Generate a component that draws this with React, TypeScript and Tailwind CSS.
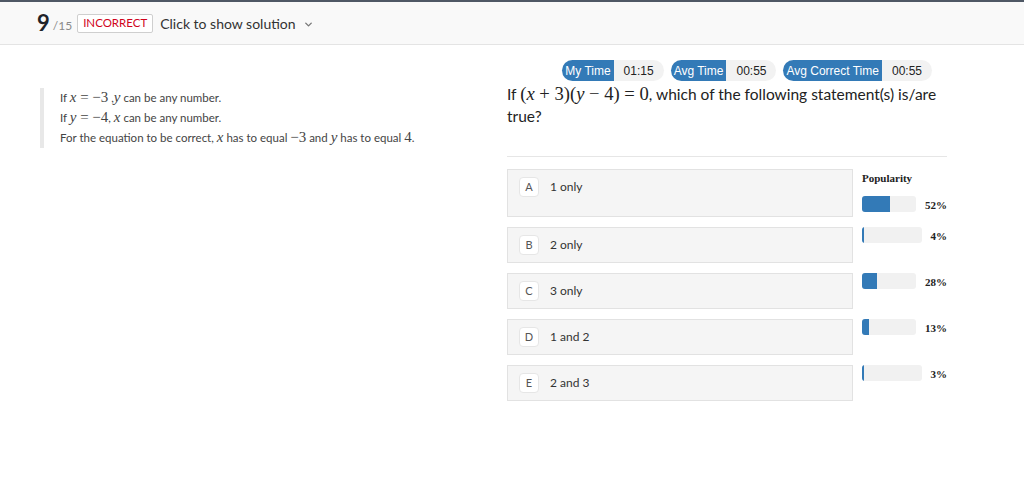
import { ChevronDown } from "lucide-react";

type Option = { letter: string; text: string; pct: number };

const options: Option[] = [
  { letter: "A", text: "1 only", pct: 52 },
  { letter: "B", text: "2 only", pct: 4 },
  { letter: "C", text: "3 only", pct: 28 },
  { letter: "D", text: "1 and 2", pct: 13 },
  { letter: "E", text: "2 and 3", pct: 3 },
];

const timers = [
  { label: "My Time", value: "01:15" },
  { label: "Avg Time", value: "00:55" },
  { label: "Avg Correct Time", value: "00:55" },
];

function M({ children, upright, big }: { children: React.ReactNode; upright?: boolean; big?: boolean }) {
  return (
    <span
      className={
        "font-['Liberation_Serif','DejaVu_Serif',serif] leading-none " +
        (big ? "text-[1.3em] " : "text-[1.2em] ") +
        (upright ? "not-italic" : "italic")
      }
    >
      {children}
    </span>
  );
}

function Op({ children, big }: { children: React.ReactNode; big?: boolean }) {
  return (
    <span
      className={
        "font-['Liberation_Serif','DejaVu_Serif',serif] leading-none mx-[0.25em] " +
        (big ? "text-[1.3em]" : "text-[1.2em]")
      }
    >
      {children}
    </span>
  );
}

function PopBar({ pct }: { pct: number }) {
  return (
    <div className="flex h-[21px] items-start gap-[9px]">
      <div className="h-4 flex-1 overflow-hidden rounded-[3px] bg-[#f1f1f1]">
        <div className="h-full bg-[#337ab7]" style={{ width: `${pct}%` }} />
      </div>
      <span className="font-['Liberation_Serif',serif] text-[11px] font-bold leading-[18px] text-[#222]">
        {pct}%
      </span>
    </div>
  );
}

export default function App() {
  return (
    <div className="min-h-[486px] bg-white font-['Lato','Noto_Sans',sans-serif] text-[#333]">
      {/* Header */}
      <div className="flex h-[45px] items-center border-t-2 border-b border-t-[#4f5865] border-b-[#e4e4e4] bg-[#f9f9f9] pl-[37px]">
        <span className="text-[22px] font-bold leading-none text-[#1f2328]">9</span>
        <span className="ml-[3px] mt-[6px] text-[12px] text-[#8a8a8a]">/15</span>
        <span className="ml-[5px] flex h-[19px] items-center rounded-[2px] border border-[#cfcfcf] bg-white px-[5px] text-[11.5px] leading-none text-[#d0021b]">
          INCORRECT
        </span>
        <span className="ml-[7px] text-[14px] text-[#333]">Click to show solution</span>
        <ChevronDown className="ml-[7px] mt-[2px] h-[11px] w-[11px] text-[#777]" strokeWidth={3} />
      </div>

      {/* Body */}
      <div className="flex pt-[15px]">
        {/* Explanation */}
        <div className="w-[507px] pl-[40px] pt-[28px]">
          <div className="border-l-4 border-[#e8e8e8] pl-[16px] text-[11.5px] leading-[20px] text-[#444]">
            <div>
              If <M big>x</M>
              <Op big>=</Op>
              <M big upright>−3</M> ,<M big>y</M> can be any number.
            </div>
            <div>
              If <M big>y</M>
              <Op big>=</Op>
              <M big upright>−4</M>, <M big>x</M> can be any number.
            </div>
            <div>
              For the equation to be correct, <M big>x</M> has to equal <M big upright>−3</M> and{" "}
              <M big>y</M> has to equal <M big upright>4</M>.
            </div>
          </div>
        </div>

        {/* Question */}
        <div className="w-[440px]">
          <div className="flex h-[21px] justify-end gap-[7px] pr-[15px] font-['Liberation_Sans',Arial,sans-serif] text-[12px]">
            {timers.map((t) => (
              <div key={t.label} className="flex h-[21px] items-stretch rounded-full bg-[#f2f2f2]">
                <span className="flex items-center rounded-l-full rounded-r-[3px] bg-[#337ab7] px-[3px] text-white">
                  {t.label}
                </span>
                <span className="flex items-center rounded-r-full px-[10px] text-[#222]">
                  {t.value}
                </span>
              </div>
            ))}
          </div>

          <div className="mt-[2px] text-[15.5px] leading-[22px] text-[#222]">
            If <M upright>(</M>
            <M>x</M>
            <Op>+</Op>
            <M upright>3)(</M>
            <M>y</M>
            <Op>−</Op>
            <M upright>4)</M>
            <Op>=</Op>
            <M upright>0</M>, which of the following statement(s) is/are true?
          </div>

          <div className="mt-[29px] mb-[12px] h-px bg-[#e6e6e6]" />

          <div className="flex flex-col gap-[10px]">
            {options.map((o, i) => (
              <div key={o.letter} className="flex items-stretch">
                <div className="flex w-[346px] items-start gap-[11px] border border-[#e2e2e2] bg-[#f5f5f5] pl-[11px] pt-[7px] pb-[7px]">
                  <span className="flex h-[20px] w-[20px] items-center justify-center rounded-[4px] border border-[#e6e6e6] bg-white text-[11px] text-[#555]">
                    {o.letter}
                  </span>
                  <span className="text-[12px] leading-[20px] text-[#333]">{o.text}</span>
                </div>
                <div className="ml-[9px] w-[85px]">
                  {i === 0 && (
                    <div className="mb-[9px] font-['Liberation_Serif',serif] text-[11px] font-bold leading-[18px] text-[#222]">
                      Popularity
                    </div>
                  )}
                  <PopBar pct={o.pct} />
                </div>
              </div>
            ))}
          </div>
        </div>
      </div>
    </div>
  );
}
